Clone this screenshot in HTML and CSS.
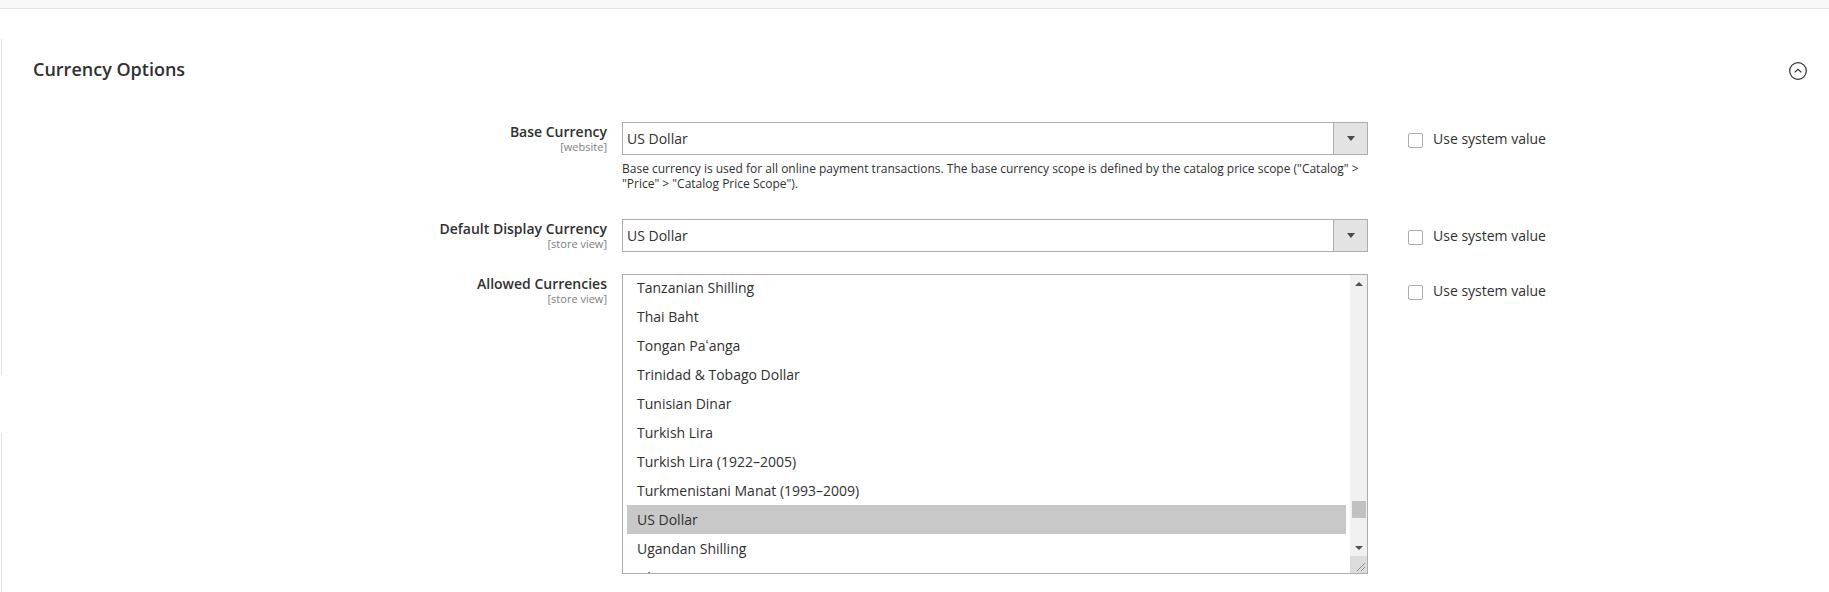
FILE: index.html
```html
<html>
<head>
	<title>Currency Setup</title>
	<link rel="stylesheet" href="styles.css">
</head>
<body>
	<div class="topbar"></div>
	<div class="page">
		<div class="rail">
			<div class="rail-top"></div>
			<div class="rail-bottom"></div>
		</div>
		<div class="section">
			<div class="section-head">
				<h2 class="section-title">Currency Options</h2>
				<span class="toggle">
					<svg width="18" height="18" viewBox="0 0 18 18">
						<circle cx="9" cy="9" r="8.3" fill="none" stroke="#303030" stroke-width="1.2"/>
						<polyline points="5.6,10.4 9,7.2 12.4,10.4" fill="none" stroke="#303030" stroke-width="1.2"/>
					</svg>
				</span>
			</div>

			<div class="fields">
				<div class="field">
					<div class="field-label">
						<label>Base Currency</label>
						<span class="scope">[website]</span>
					</div>
					<div class="field-control">
						<div class="select">
							<span class="select-value">US Dollar</span>
							<span class="select-arrow"><span class="tri-down"></span></span>
						</div>
						<p class="note">Base currency is used for all online payment transactions. The base currency scope is defined by the catalog price scope ("Catalog" &gt; "Price" &gt; "Catalog Price Scope").</p>
					</div>
					<label class="use-default"><span class="checkbox"></span>Use system value</label>
				</div>

				<div class="field">
					<div class="field-label">
						<label>Default Display Currency</label>
						<span class="scope">[store view]</span>
					</div>
					<div class="field-control">
						<div class="select">
							<span class="select-value">US Dollar</span>
							<span class="select-arrow"><span class="tri-down"></span></span>
						</div>
					</div>
					<label class="use-default"><span class="checkbox"></span>Use system value</label>
				</div>

				<div class="field">
					<div class="field-label">
						<label>Allowed Currencies</label>
						<span class="scope">[store view]</span>
					</div>
					<div class="field-control">
						<div class="multiselect">
							<div class="options">
								<div class="options-inner">
									<div class="option">Tanzanian Shilling</div>
									<div class="option">Thai Baht</div>
									<div class="option">Tongan Paʻanga</div>
									<div class="option">Trinidad &amp; Tobago Dollar</div>
									<div class="option">Tunisian Dinar</div>
									<div class="option">Turkish Lira</div>
									<div class="option">Turkish Lira (1922–2005)</div>
									<div class="option">Turkmenistani Manat (1993–2009)</div>
									<div class="option selected">US Dollar</div>
									<div class="option">Ugandan Shilling</div>
									<div class="option">Ukrainian Hryvnia</div>
								</div>
							</div>
							<div class="scrollbar">
								<div class="sb-btn"><span class="tri-up"></span></div>
								<div class="sb-track"><div class="sb-thumb"></div></div>
								<div class="sb-btn"><span class="tri-down small"></span></div>
								<div class="sb-corner">
									<svg width="17" height="17" viewBox="0 0 17 17">
										<line x1="15" y1="7" x2="7" y2="15" stroke="#8a8a8a" stroke-width="1"/>
										<line x1="15" y1="11" x2="11" y2="15" stroke="#8a8a8a" stroke-width="1"/>
									</svg>
								</div>
							</div>
						</div>
					</div>
					<label class="use-default"><span class="checkbox"></span>Use system value</label>
				</div>
			</div>
		</div>
	</div>
</body>
</html>
```

FILE: styles.css
```css
body{
	margin: 0;
	font-family: "Open Sans", "Liberation Sans", sans-serif;
	color: #303030;
	background-color: #fff;
	overflow: hidden;
}
.topbar{
	height: 8px;
	background-color: #f8f8f8;
	border-bottom: 1px solid #e3e3e3;
}
.page{
	display: flex;
	min-height: 583px;
}
.rail{
	width: 2px;
	display: flex;
	flex-direction: column;
	padding-top: 30px;
}
.rail-top{
	width: 1px;
	height: 336px;
	margin-left: 1px;
	background-color: #e3e3e3;
}
.rail-bottom{
	width: 1px;
	flex: 1;
	margin-top: 58px;
	margin-left: 1px;
	background-color: #e3e3e3;
}
.section{
	flex: 1;
	padding: 0 22px 0 31px;
}
.section-head{
	display: flex;
	justify-content: space-between;
	align-items: center;
	padding-top: 48px;
	height: 24px;
}
.section-title{
	margin: 0;
	font-size: 18px;
	font-weight: 600;
	line-height: 24px;
	color: #303030;
}
.toggle{
	display: flex;
	margin-top: 4px;
}
.fields{
	margin-top: 41px;
}
.field{
	display: flex;
	align-items: flex-start;
	margin-bottom: 22px;
}
.field-label{
	width: 589px;
	box-sizing: border-box;
	padding-right: 15px;
	text-align: right;
}
.field-label label{
	display: block;
	font-size: 14px;
	font-weight: 600;
	line-height: 18px;
	padding-top: 1px;
}
.scope{
	display: block;
	font-size: 11px;
	line-height: 12px;
	color: #808080;
}
.field-control{
	width: 746px;
}
.select{
	display: flex;
	height: 33px;
	box-sizing: border-box;
	border: 1px solid #adadad;
	background-color: #fff;
}
.select-value{
	flex: 1;
	padding-left: 4px;
	font-size: 14px;
	line-height: 31px;
}
.select-arrow{
	width: 34px;
	box-sizing: border-box;
	border-left: 1px solid #adadad;
	background-color: #e3e3e3;
	display: flex;
	justify-content: center;
	align-items: center;
}
.tri-down{
	width: 0;
	height: 0;
	border-left: 4px solid transparent;
	border-right: 4px solid transparent;
	border-top: 5px solid #514943;
}
.tri-down.small{
	border-left-width: 4px;
	border-right-width: 4px;
	border-top: 4px solid #505050;
}
.tri-up{
	width: 0;
	height: 0;
	border-left: 4px solid transparent;
	border-right: 4px solid transparent;
	border-bottom: 4px solid #505050;
}
.note{
	margin: 6px 0 6px;
	font-size: 12px;
	line-height: 15px;
}
.use-default{
	display: flex;
	align-items: flex-start;
	margin-left: 40px;
	padding-top: 8px;
	font-size: 14px;
	line-height: 18px;
	white-space: nowrap;
}
.checkbox{
	width: 15px;
	height: 15px;
	box-sizing: border-box;
	border: 1px solid #adadad;
	border-radius: 2px;
	margin-top: 3px;
	margin-right: 10px;
	background-color: #fff;
}
.multiselect{
	display: flex;
	height: 300px;
	box-sizing: border-box;
	border: 1px solid #adadad;
}
.options{
	flex: 1;
	padding: 0 4px;
	overflow: hidden;
}
.options-inner{
	margin-top: -2px;
}
.option{
	height: 29px;
	padding-left: 10px;
	font-size: 14px;
	line-height: 29px;
	white-space: nowrap;
}
.option.selected{
	background-color: #c8c8c8;
}
.scrollbar{
	width: 17px;
	display: flex;
	flex-direction: column;
	background-color: #f1f1f1;
}
.sb-btn{
	height: 17px;
	display: flex;
	justify-content: center;
	align-items: center;
}
.sb-track{
	flex: 1;
}
.sb-thumb{
	height: 17px;
	margin: 209px 1px 0 2px;
	background-color: #c1c1c1;
}
.sb-corner{
	height: 17px;
	background-color: #dcdcdc;
	display: flex;
}
```
